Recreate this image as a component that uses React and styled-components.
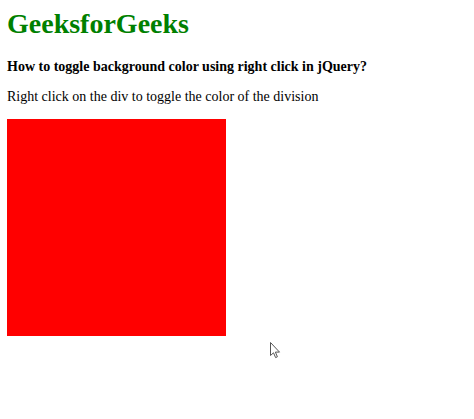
import styled, { createGlobalStyle } from "styled-components";

const GlobalStyle = createGlobalStyle`
  html, body {
    margin: 0;
    padding: 0;
    background: #fff;
  }
  body {
    font-family: "Liberation Serif", "Times New Roman", serif;
    color: #000;
  }
`;

const Page = styled.div`
  position: relative;
  width: 474px;
  height: 419px;
  padding: 8px 7px 0;
  box-sizing: border-box;
  display: flex;
  flex-direction: column;
  align-items: flex-start;
  overflow: hidden;
`;

const Title = styled.h1`
  margin: 0;
  font-size: 28px;
  line-height: 32px;
  font-weight: bold;
  color: #008000;
`;

const Heading = styled.h4`
  margin: 19.4px 0 0;
  font-size: 14px;
  line-height: 16px;
  font-weight: bold;
`;

const Text = styled.p`
  margin: 13.5px 0 0;
  font-size: 14px;
  line-height: 16px;
`;

const Box = styled.div`
  margin-top: 14.1px;
  width: 219px;
  height: 217px;
  background: ${(p) => p.color};
`;

const Cursor = styled.svg`
  position: absolute;
  left: 270px;
  top: 342px;
`;

const App = () => {
  return (
    <>
      <GlobalStyle />
      <Page>
        <Title>GeeksforGeeks</Title>
        <Heading>How to toggle background color using right click in jQuery?</Heading>
        <Text>Right click on the div to toggle the color of the division</Text>
        <Box color="#ff0000" />
        <Cursor width="11" height="17" viewBox="0 0 11 17">
          <path
            d="M0.5 0.5 L0.5 13.5 L3.5 10.8 L5.6 15.6 L7.4 14.8 L5.4 10.1 L9.5 10.1 Z"
            fill="#fff"
            stroke="#555"
            strokeWidth="1"
            strokeLinejoin="round"
          />
        </Cursor>
      </Page>
    </>
  );
};

export default App;
